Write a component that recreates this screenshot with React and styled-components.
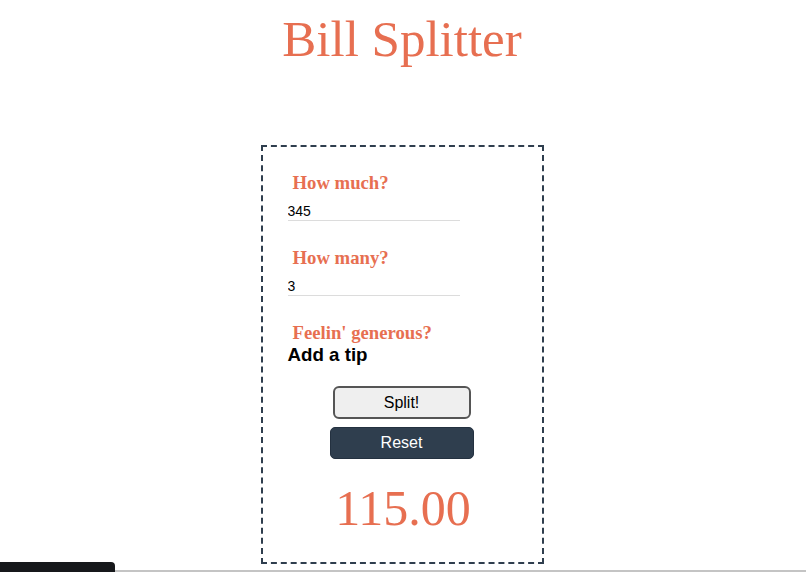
import React, { useState } from "react";
import styled, { createGlobalStyle } from "styled-components";

const GlobalStyle = createGlobalStyle`
  body {
    margin: 0;
    background: #ffffff;
    font-family: "Liberation Serif", "Times New Roman", serif;
  }
`;

const Page = styled.div`
  display: flex;
  flex-direction: column;
  align-items: center;
  min-height: 572px;
  padding-right: 2px;
`;

const Title = styled.h1`
  margin: 10px 0 0;
  font-size: 51px;
  line-height: 58px;
  font-weight: 400;
  color: #e76f51;
`;

const Card = styled.div`
  box-sizing: border-box;
  width: 283px;
  margin-top: 77px;
  padding: 25px 23px 25px 25px;
  border: 2px dashed #2f3e4e;
  display: flex;
  flex-direction: column;
`;

const Field = styled.div`
  display: flex;
  flex-direction: column;
  align-items: flex-start;
  & + & {
    margin-top: 26px;
  }
`;

const Label = styled.h3`
  margin: 0 0 ${(p) => (p.$tight ? "0" : "7px")} 5px;
  font-size: 18.72px;
  line-height: 22px;
  font-weight: 700;
  color: #e76f51;
`;

const Input = styled.input`
  box-sizing: border-box;
  width: 172px;
  height: 20px;
  padding: 0;
  border: none;
  border-bottom: 1px solid #dcdcdc;
  outline: none;
  font-family: "Liberation Sans", Arial, sans-serif;
  font-size: 14px;
  color: #000;
  background: transparent;
`;

const TipHeading = styled.h3`
  margin: 0;
  font-family: "Liberation Sans", Arial, sans-serif;
  font-size: 18.72px;
  line-height: 22px;
  font-weight: 700;
  color: #000;
`;

const Actions = styled.div`
  display: flex;
  flex-direction: column;
  align-items: center;
  gap: 8px;
  margin: 20px 0 0 -3px;
`;

const Button = styled.button`
  box-sizing: border-box;
  width: ${(p) => (p.$dark ? "144px" : "138px")};
  height: ${(p) => (p.$dark ? "32px" : "33px")};
  border: ${(p) => (p.$dark ? "1px solid #243140" : "2px solid #555")};
  border-radius: ${(p) => (p.$dark ? "5px" : "6px")};
  background: ${(p) => (p.$dark ? "#2f3e4e" : "#efefef")};
  color: ${(p) => (p.$dark ? "#fff" : "#000")};
  font-family: "Liberation Sans", Arial, sans-serif;
  font-size: 16px;
  cursor: pointer;
`;

const Result = styled.div`
  margin-top: 20px;
  text-align: center;
  font-size: 50px;
  line-height: 58px;
  color: #e76f51;
`;

const Dock = styled.div`
  position: fixed;
  left: 0;
  right: 0;
  bottom: 0;
  height: 10px;
  display: flex;
  align-items: flex-end;
  pointer-events: none;
`;

const DockTab = styled.div`
  width: 115px;
  height: 10px;
  background: #16181b;
  border-top-right-radius: 4px;
`;

const DockLine = styled.div`
  flex: 1;
  height: 2px;
  background: #c4c4c4;
`;

const App = () => {
  const [amount, setAmount] = useState("345");
  const [people, setPeople] = useState("3");
  const [share, setShare] = useState("115.00");

  const split = () => {
    const total = parseFloat(amount) || 0;
    const n = parseInt(people, 10) || 1;
    setShare((total / n).toFixed(2));
  };

  const reset = () => {
    setAmount("");
    setPeople("");
    setShare("0.00");
  };

  return (
    <>
      <GlobalStyle />
      <Page>
        <Title>Bill Splitter</Title>
        <Card>
          <Field>
            <Label>How much?</Label>
            <Input value={amount} onChange={(e) => setAmount(e.target.value)} />
          </Field>
          <Field>
            <Label>How many?</Label>
            <Input value={people} onChange={(e) => setPeople(e.target.value)} />
          </Field>
          <Field>
            <Label $tight>Feelin' generous?</Label>
            <TipHeading>Add a tip</TipHeading>
          </Field>
          <Actions>
            <Button onClick={split}>Split!</Button>
            <Button $dark onClick={reset}>
              Reset
            </Button>
          </Actions>
          <Result>{share}</Result>
        </Card>
      </Page>
      <Dock>
        <DockTab />
        <DockLine />
      </Dock>
    </>
  );
};

export default App;
